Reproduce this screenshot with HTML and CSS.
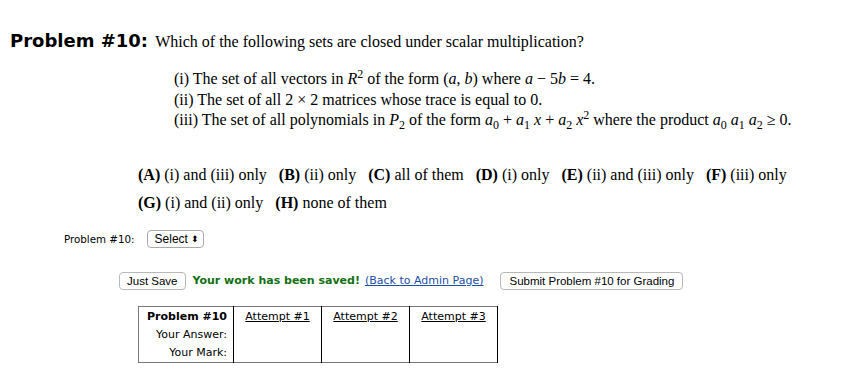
FILE: index.html
```html
<!DOCTYPE html>
<html lang="en">
<head>
    <meta charset="UTF-8">
    <title>Problem 10</title>
    <link rel="stylesheet" href="styles.css">
</head>
<body>
    <div class="problem">
        <div class="question">
            <span class="prob-title">Problem #10:</span>
            <span class="prob-text">Which of the following sets are closed under scalar multiplication?</span>
        </div>

        <div class="sets">
            <div>(i) The set of all vectors in <i>R</i><sup>2</sup> of the form (<i>a</i>, <i>b</i>) where <i>a</i> &minus; 5<i>b</i> = 4.</div>
            <div>(ii) The set of all 2 &times; 2 matrices whose trace is equal to 0.</div>
            <div>(iii) The set of all polynomials in <i>P</i><sub>2</sub> of the form <i>a</i><sub>0</sub> + <i>a</i><sub>1</sub> <i>x</i> + <i>a</i><sub>2</sub> <i>x</i><sup>2</sup> where the product <i>a</i><sub>0</sub> <i>a</i><sub>1</sub> <i>a</i><sub>2</sub> &ge; 0.</div>
        </div>

        <div class="choices">
            <div><b>(A)</b> (i) and (iii) only <span class="gap"></span><b>(B)</b> (ii) only <span class="gap"></span><b>(C)</b> all of them <span class="gap"></span><b>(D)</b> (i) only <span class="gap"></span><b>(E)</b> (ii) and (iii) only <span class="gap"></span><b>(F)</b> (iii) only</div>
            <div><b>(G)</b> (i) and (ii) only <span class="gap"></span><b>(H)</b> none of them</div>
        </div>

        <div class="answer-row">
            <span class="label">Problem #10:</span>
            <span class="select">Select <span class="arrows">&#x2B0D;</span></span>
        </div>

        <div class="actions">
            <span class="btn">Just Save</span>
            <span class="saved">Your work has been saved!</span>
            <a href="#" class="admin-link">(Back to Admin Page)</a>
            <span class="btn submit">Submit Problem #10 for Grading</span>
        </div>

        <table class="attempts">
            <tr>
                <th>Problem #10</th>
                <td><a href="#">Attempt #1</a></td>
                <td><a href="#">Attempt #2</a></td>
                <td><a href="#">Attempt #3</a></td>
            </tr>
            <tr>
                <th class="normal">Your Answer:</th>
                <td></td>
                <td></td>
                <td></td>
            </tr>
            <tr>
                <th class="normal">Your Mark:</th>
                <td></td>
                <td></td>
                <td></td>
            </tr>
        </table>
    </div>
</body>
</html>
```

FILE: styles.css
```css
body {
    margin: 0;
    background: #fff;
    color: #000;
    font-family: "DejaVu Sans", Verdana, sans-serif;
}

.problem {
    padding: 29px 0 0 10px;
}

.question {
    height: 24px;
    line-height: 24px;
}

.prob-title {
    font-weight: bold;
    font-size: 18px;
}

.prob-text {
    font-family: "Liberation Serif", "Times New Roman", serif;
    font-size: 16px;
    margin-left: 2px;
}

.sets {
    margin: 16px 0 0 164px;
    font-family: "Liberation Serif", "Times New Roman", serif;
    font-size: 16px;
    line-height: 20.5px;
}

sup, sub {
    font-size: 12px;
    line-height: 0;
}

.choices {
    margin: 30px 0 0 128px;
    font-family: "Liberation Serif", "Times New Roman", serif;
    font-size: 16px;
    line-height: 28px;
}

.gap {
    display: inline-block;
    width: 8px;
}

.answer-row {
    display: flex;
    align-items: center;
    margin: 12px 0 0 54px;
    height: 20px;
}

.label {
    font-size: 10.3px;
    margin-right: 12px;
}

.select {
    display: inline-flex;
    align-items: center;
    height: 16px;
    padding: 0 5px 0 7px;
    border: 1px solid #a9a9a9;
    border-radius: 4px;
    font-family: "Liberation Sans", Arial, sans-serif;
    font-size: 12px;
}

.arrows {
    font-family: "DejaVu Sans", sans-serif;
    font-size: 9px;
    margin-left: 3px;
}

.actions {
    display: flex;
    align-items: center;
    margin: 22px 0 0 109px;
    height: 20px;
    font-size: 11px;
}

.btn {
    display: inline-flex;
    align-items: center;
    height: 16px;
    padding: 0 7px;
    border: 1px solid #b8b8b8;
    border-radius: 4px;
    font-family: "Liberation Sans", Arial, sans-serif;
    font-size: 11.5px;
}

.saved {
    color: #127112;
    font-weight: bold;
    margin-left: 7px;
}

.admin-link {
    color: #1a4fa6;
    margin-left: 5px;
}

.submit {
    margin-left: 17px;
    padding: 0 8px;
}

.attempts {
    margin: 15px 0 0 128px;
    border-collapse: collapse;
    border: 1px solid #777;
    font-size: 11px;
}

.attempts th,
.attempts td {
    height: 18px;
    padding: 0 3px;
}

.attempts tr:first-child th,
.attempts tr:first-child td {
    height: 19px;
}

.attempts th {
    text-align: right;
    width: 88px;
    padding: 0 6px 0 0;
    border-right: 1px solid #000;
}

.attempts th.normal {
    font-weight: normal;
}

.attempts td {
    text-align: center;
    width: 81px;
    border-right: 1px solid #000;
}

.attempts a {
    color: #000;
}
```
